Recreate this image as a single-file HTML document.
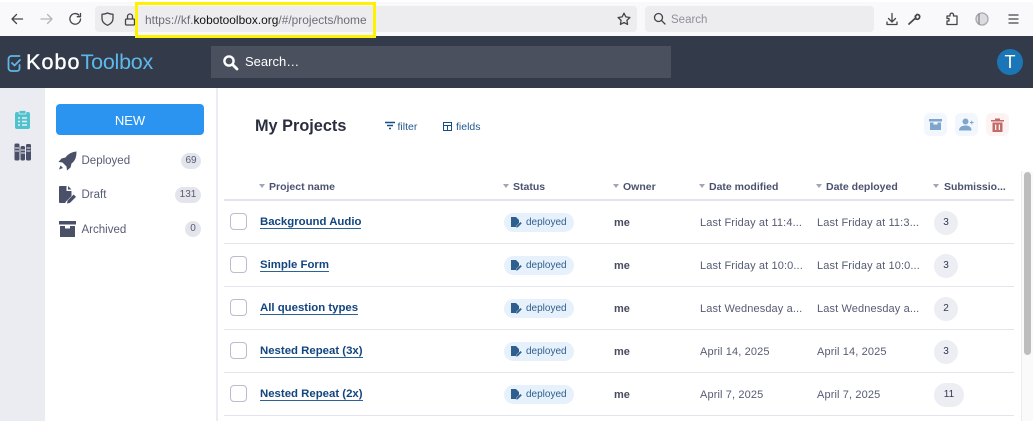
<!DOCTYPE html>
<html><head><meta charset="utf-8">
<style>
html,body{margin:0;padding:0}
body{width:1033px;height:421px;position:relative;overflow:hidden;background:#fff;font-family:"Liberation Sans",sans-serif;color:#3f4660}
.a,svg.a{position:absolute}
.t{position:absolute;white-space:nowrap;line-height:14px}
.th{font-size:10.5px;font-weight:bold;color:#4b5270;top:180px}
.ar{position:absolute;top:184px;width:0;height:0;border-left:3px solid transparent;border-right:3px solid transparent;border-top:4px solid #a0a5b8}
.line{position:absolute;left:224px;width:790px;height:1px;background:#e3e4ec}
.cb{position:absolute;left:230px;width:14.500px;height:14.500px;border:1.5px solid #b9bdcd;border-radius:4px;background:#fff}
.name{position:absolute;left:260px;font-size:11.4px;font-weight:bold;color:#12457f;border-bottom:1.5px solid #2c6396;line-height:11px;white-space:nowrap}
.pill{position:absolute;left:504px;width:70px;height:19px;border-radius:10px;background:#e6f1fb;color:#2f5f8f;font-size:10px;line-height:20px;text-indent:22px}
.me{position:absolute;left:614px;font-size:11px;font-weight:bold;color:#474c5f;line-height:14px}
.d{position:absolute;font-size:11px;color:#565c74;line-height:14px;white-space:nowrap;letter-spacing:.12px}
.n{position:absolute;left:934px;height:24px;min-width:24px;border-radius:12px;background:#eceef3;color:#32384e;font-size:10px;line-height:24px;text-align:center}
.bd{position:absolute;height:16px;border-radius:8px;background:#e4e5ec;color:#565c74;font-size:10px;line-height:16px;text-align:center}
.side{position:absolute;left:81.500px;font-size:11.500px;color:#565c74;line-height:14px}
.ib{position:absolute;top:113px;width:23px;height:23px;border-radius:6px}
</style></head><body>

<!-- browser toolbar -->
<div class="a" style="left:0;top:0;width:1033px;height:36px;background:#f9f9fb"></div>
<div class="a" style="left:0;top:0;width:1033px;height:2px;background:#fff"></div>
<div class="a" style="left:95px;top:6px;width:542px;height:26px;background:#ededf0;border-radius:4px"></div>
<div class="a" style="left:645px;top:6px;width:229px;height:26px;background:#ededf0;border-radius:4px"></div>
<svg class="a" style="left:0;top:0" width="1033" height="36" fill="none" stroke="#44444c" stroke-width="1.3" stroke-linecap="round" stroke-linejoin="round">
<path d="M22.500 19H12M16.500 14.500 12 19l4.500 4.500"/>
<path d="M41 19h11M47.500 14.500 52 19l-4.500 4.500" stroke="#b5b5ba"/>
<path d="M80.500 19a5.300 5.300 0 1 1-1.600-3.900M80.500 13.500v3.200h-3.200"/>
<path d="M107.500 13c2 1 3.500 1.300 5.500 1.300v4.200c0 3.700-2.500 5.500-5.500 6.800-3-1.300-5.500-3.100-5.500-6.800v-4.200c2 0 3.500-.3 5.500-1.300z"/>
<rect x="125.500" y="19" width="9" height="6" rx="1"/><path d="M127.500 19v-2.500a2.500 2.500 0 0 1 5 0V19"/>
<path d="m624 13.200 1.800 3.700 4.100.6-3 2.900.7 4-3.600-1.900-3.600 1.900.7-4-3-2.900 4.100-.6z"/>
<circle cx="658.500" cy="17.500" r="4"/><path d="m661.500 20.500 3.500 3.500"/>
<path d="M892 13.500v8M888.500 18.500l3.500 3.500 3.500-3.500M887 22v2.500h10V22"/>
<path d="m917 14.500-1.800 1.800.6 1.400-6.800 6.300M917.500 14.500c2 .2 2.800 2.200 1.800 3.700-1 1.300-2.600 1.200-3.500.7" stroke-width="1.700"/>
<path d="M947 16h3v-1.500a1.800 1.800 0 0 1 3.500 0V16h3.500v8.500h-10V21h2v-2.500h-2z"/>
<circle cx="982" cy="19" r="6" stroke="#a8a8ae" fill="#dcdce0"/><path d="M979 14v10" stroke="#88888e"/>
<path d="M1009 15h9M1009 19h9M1009 23h9"/>
</svg>
<div class="t" style="left:145px;top:12.500px;font-size:11.900px;letter-spacing:.02px;color:#6c6c75">https://kf.<span style="color:#111">kobotoolbox.org</span>/#/projects/home</div>
<div class="t" style="left:671px;top:12.500px;font-size:11.500px;color:#90909a">Search</div>

<!-- kobo header -->
<div class="a" style="left:0;top:36px;width:1033px;height:52px;background:#333a49"></div>
<svg class="a" style="left:7px;top:53px" width="16" height="20" fill="none" stroke="#5db8ea" stroke-width="1.800" stroke-linecap="round" stroke-linejoin="round"><path d="M12.500 3H4.500A3 3 0 0 0 1.500 6v9a3 3 0 0 0 3 3h5.500a2.500 2.500 0 0 0 2.500-2.500V12"/><path d="m5 10 2.500 2.500L13 7"/></svg>
<div class="t" style="left:26px;top:50px;font-size:21.500px;line-height:24px;color:#fff"><span style="-webkit-text-stroke:.4px #fff;letter-spacing:1.100px">Kobo</span><span style="color:#5db8ea;letter-spacing:-.25px">Toolbox</span></div>
<div class="a" style="left:211px;top:46px;width:460px;height:32px;background:#4a505e"></div>
<svg class="a" style="left:222px;top:54px" width="17" height="17" fill="none" stroke="#fff" stroke-width="2.400" stroke-linecap="round"><circle cx="7" cy="7" r="4.600"/><path d="m10.500 10.500 4.500 4.500" stroke-width="2.800"/></svg>
<div class="t" style="left:245px;top:55px;font-size:13px;color:#fff">Search…</div>
<div class="a" style="left:997px;top:49px;width:26px;height:26px;border-radius:50%;background:#1b76b8;color:#fff;font-size:18px;line-height:26px;text-align:center">T</div>

<!-- left rail -->
<div class="a" style="left:0;top:88px;width:45px;height:333px;background:#ebecf2"></div>
<svg class="a" style="left:14px;top:110px" width="17" height="20"><rect x="1" y="2" width="15" height="17" rx="2" fill="#4fc3cd"/><rect x="5" y="0.500" width="7" height="3.500" rx="1" fill="#4fc3cd" stroke="#ebecf2" stroke-width=".8"/><path d="M4 8h2M8 8h5M4 11.500h2M8 11.500h5M4 15h2M8 15h5" stroke="#ebecf2" stroke-width="1.500"/></svg>
<svg class="a" style="left:14px;top:143px" width="18" height="18" fill="#4a5068"><rect x="0.500" y="0.500" width="5" height="17" rx="1.500"/><rect x="6.500" y="3" width="4.500" height="14.500" rx="1.500"/><rect x="12" y="1" width="5" height="16.500" rx="1.500"/><path d="M1 5h4M1 8h4M7 7h4M7 10h4M12.500 5h4M12.500 8h4" stroke="#ebecf2" stroke-width="1"/></svg>

<!-- sidebar -->
<div class="a" style="left:216px;top:88px;width:2px;height:333px;background:#ebecf1"></div>
<div class="a" style="left:56px;top:104px;width:148px;height:31px;background:#2b94f0;border-radius:4px;color:#fff;font-size:13px;line-height:33px;text-align:center">NEW</div>
<svg class="a" style="left:58px;top:151px" width="20" height="20" fill="#4a5068"><path d="M18.500.5c-5 .5-8.500 2.500-11 6L3.500 7.500.5 11l4 .5 4 4 .5 4 3.500-3 1-4c3.500-2.500 5-6 5-12z"/><path d="M2.500 14.500 1 18.500l4-1.500z"/></svg>
<div class="side" style="top:154px">Deployed</div>
<div class="bd" style="left:181px;top:153px;width:20px">69</div>
<svg class="a" style="left:59px;top:186px" width="18" height="20" fill="#4a5068"><path d="M0 1a1 1 0 0 1 1-1h6.500v5h5v5L6.500 16v1H1a1 1 0 0 1-1-1z"/><path d="M9 0l3.500 3.500H9z"/><path d="m8 17.500 .6-3 6-6 2.400 2.400-6 6z"/></svg>
<div class="side" style="top:188px">Draft</div>
<div class="bd" style="left:175px;top:187px;width:26px">131</div>
<svg class="a" style="left:59px;top:221px" width="17" height="16" fill="#4a5068"><rect x="0" y="0" width="17" height="3.500"/><path d="M1 5h5v2.500h5V5h5v11H1z"/></svg>
<div class="side" style="top:223px">Archived</div>
<div class="bd" style="left:185px;top:221px;width:16px">0</div>

<!-- title row -->
<div class="t" style="left:255px;top:117px;font-size:16.300px;line-height:18px;font-weight:bold;color:#2a2f3f">My Projects</div>
<svg class="a" style="left:385px;top:121px" width="10" height="10" fill="none" stroke="#154f8a" stroke-width="1.500"><path d="M0 1.500h10M2 4.500h6M4 7.500h2"/></svg>
<div class="t" style="left:397.500px;top:120px;font-size:10.500px;color:#22588f">filter</div>
<svg class="a" style="left:443px;top:122px" width="9" height="9"><rect x="0.500" y="0.500" width="8" height="8" fill="none" stroke="#154f8a"/><path d="M0 3.500h9M4.500 3.500V9" stroke="#154f8a"/></svg>
<div class="t" style="left:456px;top:120px;font-size:10.500px;color:#22588f">fields</div>

<div class="ib" style="left:924px;background:#f2f7fd"></div>
<svg class="a" style="left:929px;top:119px" width="13" height="12" fill="#7ea6cc"><rect width="13" height="2.500"/><path d="M1 3.500h3.500v2h4v-2H12V11H1z"/></svg>
<div class="ib" style="left:955px;background:#f2f7fd"></div>
<svg class="a" style="left:959px;top:118px" width="15" height="13" fill="#7ea6cc"><circle cx="6.500" cy="3.500" r="3"/><path d="M0 12.500c0-3.500 3-5 6.500-5s6 1.500 6 5z"/><path d="M11 4.500h3.500M12.750 2.750v3.500" stroke="#7ea6cc"/></svg>
<div class="ib" style="left:986px;background:#fdf3f2"></div>
<svg class="a" style="left:991px;top:118px" width="13" height="14" fill="#c26b6b"><path d="M0 2h4V.5h5V2h4v1.500H0z"/><path d="M1.500 4.500h10V14h-10zM4 6.500V12h1.300V6.500zM7.700 6.500V12H9V6.500z" fill-rule="evenodd"/></svg>

<!-- table header -->
<div class="ar" style="left:259px"></div><div class="t th" style="left:269px">Project name</div>
<div class="ar" style="left:503px"></div><div class="t th" style="left:513px">Status</div>
<div class="ar" style="left:613px"></div><div class="t th" style="left:623px">Owner</div>
<div class="ar" style="left:699px"></div><div class="t th" style="left:709px">Date modified</div>
<div class="ar" style="left:816px"></div><div class="t th" style="left:826px">Date deployed</div>
<div class="ar" style="left:933px"></div><div class="t th" style="left:944px">Submissio...</div>
<div class="line" style="top:199px;height:2px"></div>

<!-- rows -->
<div class="cb" style="top:213px"></div><div class="name" style="top:217px">Background Audio</div>
<div class="pill" style="top:213px">deployed</div><div class="me" style="top:216px">me</div>
<div class="d" style="left:700px;top:216px">Last Friday at 11:4...</div><div class="d" style="left:817px;top:216px">Last Friday at 11:3...</div>
<div class="n" style="top:211px;width:24px">3</div>
<div class="line" style="top:243px"></div>

<div class="cb" style="top:256px"></div><div class="name" style="top:260px">Simple Form</div>
<div class="pill" style="top:256px">deployed</div><div class="me" style="top:259px">me</div>
<div class="d" style="left:700px;top:259px">Last Friday at 10:0...</div><div class="d" style="left:817px;top:259px">Last Friday at 10:0...</div>
<div class="n" style="top:254px;width:24px">3</div>
<div class="line" style="top:286px"></div>

<div class="cb" style="top:299px"></div><div class="name" style="top:303px">All question types</div>
<div class="pill" style="top:299px">deployed</div><div class="me" style="top:302px">me</div>
<div class="d" style="left:700px;top:302px">Last Wednesday a...</div><div class="d" style="left:817px;top:302px">Last Wednesday a...</div>
<div class="n" style="top:297px;width:24px">2</div>
<div class="line" style="top:329px"></div>

<div class="cb" style="top:342px"></div><div class="name" style="top:346px">Nested Repeat (3x)</div>
<div class="pill" style="top:342px">deployed</div><div class="me" style="top:345px">me</div>
<div class="d" style="left:700px;top:345px">April 14, 2025</div><div class="d" style="left:817px;top:345px">April 14, 2025</div>
<div class="n" style="top:340px;width:24px">3</div>
<div class="line" style="top:372px"></div>

<div class="cb" style="top:385px"></div><div class="name" style="top:389px">Nested Repeat (2x)</div>
<div class="pill" style="top:385px">deployed</div><div class="me" style="top:388px">me</div>
<div class="d" style="left:700px;top:388px">April 7, 2025</div><div class="d" style="left:817px;top:388px">April 7, 2025</div>
<div class="n" style="top:383px;width:30px">11</div>
<div class="line" style="top:415px"></div>

<!-- pill icons -->
<svg class="a" style="left:511px;top:217px" width="11" height="11" fill="#2f5f8f"><path d="M0 0h5l3 3v3L5 9v1H0zM5 10.500l.5-1.500 4-4 1.300 1.300-4 4z"/></svg>
<svg class="a" style="left:511px;top:260px" width="11" height="11" fill="#2f5f8f"><path d="M0 0h5l3 3v3L5 9v1H0zM5 10.500l.5-1.500 4-4 1.300 1.300-4 4z"/></svg>
<svg class="a" style="left:511px;top:303px" width="11" height="11" fill="#2f5f8f"><path d="M0 0h5l3 3v3L5 9v1H0zM5 10.500l.5-1.500 4-4 1.300 1.300-4 4z"/></svg>
<svg class="a" style="left:511px;top:346px" width="11" height="11" fill="#2f5f8f"><path d="M0 0h5l3 3v3L5 9v1H0zM5 10.500l.5-1.500 4-4 1.300 1.300-4 4z"/></svg>
<svg class="a" style="left:511px;top:389px" width="11" height="11" fill="#2f5f8f"><path d="M0 0h5l3 3v3L5 9v1H0zM5 10.500l.5-1.500 4-4 1.300 1.300-4 4z"/></svg>

<!-- scrollbar -->
<div class="a" style="left:1021px;top:171px;width:12px;height:250px;background:#fafafa;border-left:1px solid #ececec;box-sizing:border-box"></div>
<div class="a" style="left:1024px;top:172px;width:7px;height:183px;background:#bdbdbd;border-radius:4px"></div>

<!-- yellow highlight -->
<div class="a" style="left:135px;top:2px;width:241px;height:36px;box-sizing:border-box;border:3px solid #fff200"></div>
</body></html>
